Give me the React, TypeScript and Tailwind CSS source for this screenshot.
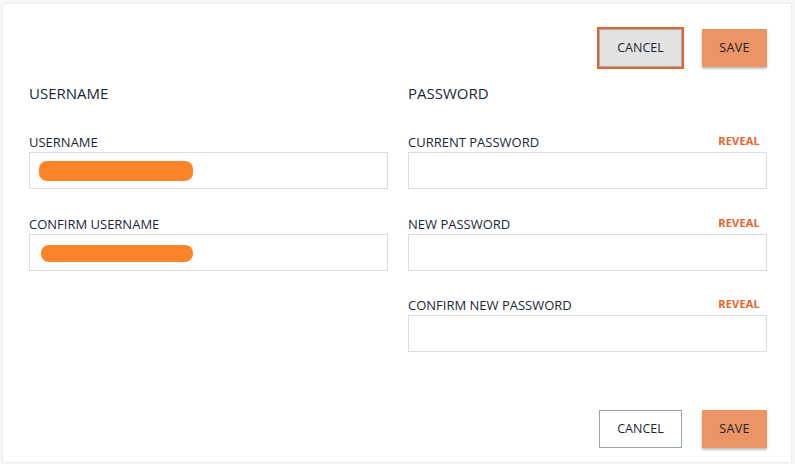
const font = { fontFamily: '"Open Sans", "Noto Sans", sans-serif' };

function Field({ label, reveal, masked, pillClass }: { label: string; reveal?: boolean; masked?: boolean; pillClass?: string }) {
  return (
    <div className="flex flex-col">
      <div className="flex items-end justify-between h-[14px] mb-[3px]">
        <span className="text-[13px] leading-none text-[#1b2735]">{label}</span>
        {reveal && <span className="mr-[7px] mb-[3px] text-[11px] font-bold leading-none text-[#e8632b] tracking-[0.2px]">REVEAL</span>}
      </div>
      <div className="h-[37px] border border-[#d5dee4] bg-white flex items-center">
        {masked && <div className={pillClass} />}
      </div>
    </div>
  );
}

export default function App() {
  return (
    <div className="w-[795px] h-[464px] bg-[#f7f7f7] pt-[4px] pl-[3px] pr-[3px] pb-[2px]" style={font}>
      <div className="w-[788px] h-[458px] bg-white shadow-[0_0_2px_rgba(0,0,0,0.12)] flex flex-col pl-[26px] pr-[24px]">
        <div className="flex justify-end items-center gap-[18px] pt-[23px]">
          <button className="w-[87px] h-[42px] border-2 border-[#e0662a] bg-[#e2e2e2] p-0">
            <div className="w-full h-full border border-[#a3adb2] flex items-center justify-center text-[12.5px] text-[#1b2735]">CANCEL</div>
          </button>
          <button className="w-[65px] h-[38px] bg-[#eb9567] shadow-[0_2px_2px_rgba(0,0,0,0.25)] text-[12.5px] font-medium tracking-[0.3px] text-[#222]">SAVE</button>
        </div>
        <div className="grid grid-cols-2 gap-[20px] mt-[14px]">
          <div className="flex flex-col">
            <h2 className="text-[15px] leading-[20px] text-[#1b2735]">USERNAME</h2>
            <div className="flex flex-col gap-[28px] mt-[32px]">
              <Field label="USERNAME" masked pillClass="ml-[9px] w-[154px] h-[20px] rounded-[8px] bg-[#ff8329]" />
              <Field label="CONFIRM USERNAME" masked pillClass="ml-[11px] mt-[1px] w-[152px] h-[17px] rounded-[8px] bg-[#ff8329]" />
            </div>
          </div>
          <div className="flex flex-col">
            <h2 className="text-[15px] leading-[20px] text-[#1b2735]">PASSWORD</h2>
            <div className="flex flex-col gap-[27px] mt-[32px]">
              <Field label="CURRENT PASSWORD" reveal />
              <div className="mt-[1px]">
                <Field label="NEW PASSWORD" reveal />
              </div>
              <Field label="CONFIRM NEW PASSWORD" reveal />
            </div>
          </div>
        </div>
        <div className="flex justify-end items-center gap-[20px] mt-auto mb-[14px]">
          <button className="w-[83px] h-[38px] border border-[#95a3ab] bg-white text-[12.5px] text-[#1b2735]">CANCEL</button>
          <button className="w-[65px] h-[38px] bg-[#eb9567] shadow-[0_2px_2px_rgba(0,0,0,0.25)] text-[12.5px] font-medium tracking-[0.3px] text-[#222]">SAVE</button>
        </div>
      </div>
    </div>
  );
}
